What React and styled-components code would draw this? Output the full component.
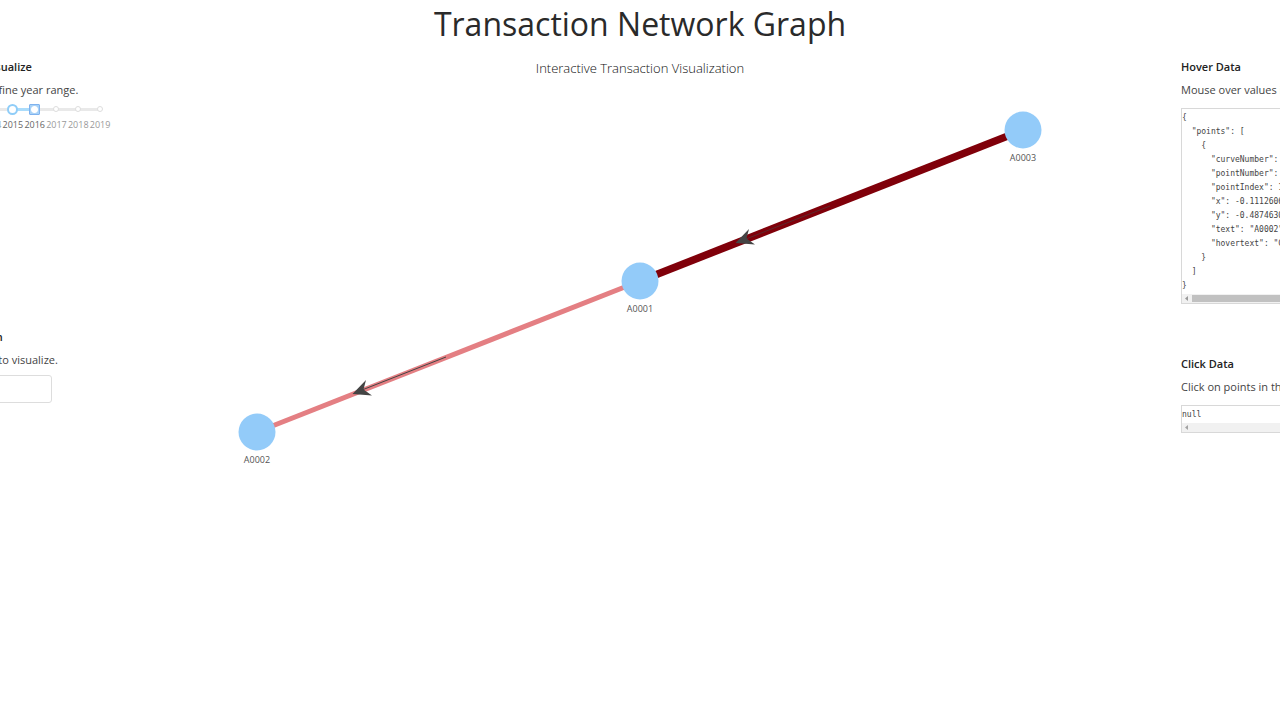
import { useState } from "react";
import styled, { createGlobalStyle } from "styled-components";

const years = [2010, 2011, 2012, 2013, 2014, 2015, 2016, 2017, 2018, 2019];

const nodes = [
  { id: "A0001", x: 640, y: 281 },
  { id: "A0002", x: 257, y: 432 },
  { id: "A0003", x: 1023, y: 130 },
];

const hoverData = {
  points: [
    {
      curveNumber: 2,
      pointNumber: 1,
      pointIndex: 1,
      x: -0.11126064,
      y: -0.48746302,
      text: "A0002",
      hovertext: "CustomerName: A0002",
    },
  ],
};

const YearSlider = () => {
  const [from, setFrom] = useState(2015);
  const [to, setTo] = useState(2016);
  return (
    <SliderWrapper>
      <div className="track">
        {years.map((year) => (
          <Step key={year} $on={year > from && year <= to}>
            <span className="dot" />
          </Step>
        ))}
        <Range
          type="range"
          aria-label="First year"
          min={2010}
          max={2019}
          value={from}
          onChange={(e) => setFrom(Math.min(Number(e.target.value), to))}
        />
        <Range
          $active
          type="range"
          aria-label="Last year"
          min={2010}
          max={2019}
          value={to}
          onChange={(e) => setTo(Math.max(Number(e.target.value), from))}
        />
      </div>
      <div className="marks">
        {years.map((year) => (
          <Mark key={year} $on={year >= from && year <= to}>
            {year}
          </Mark>
        ))}
      </div>
    </SliderWrapper>
  );
};

const DataBox = ({ data, full }) => (
  <Output>
    <pre>{JSON.stringify(data, null, 2)}</pre>
    <ScrollBar $full={full}>
      <svg width="10" height="9" viewBox="0 0 10 9">
        <path d="M6 2v5L3 4.500z" fill={full ? "#a3a3a3" : "#999"} />
      </svg>
      <span className="thumb" />
    </ScrollBar>
  </Output>
);

const Graph = () => (
  <GraphSvg viewBox="99 90 1082 400" role="img" aria-label="Network graph">
    <line x1="640" y1="281" x2="257" y2="432" stroke="#e47f83" strokeWidth="5" />
    <line x1="1023" y1="130" x2="640" y2="281" stroke="#80000a" strokeWidth="7.500" />
    <g fill="#444" stroke="#444">
      <path d="M446 357L362 390" strokeWidth="1" />
      <path d="M352.500 394L366 380L363.500 389.500L372 395.500z" stroke="none" />
      <path d="M830 206L746 239" strokeWidth="1" opacity="0.6" />
      <path d="M735.500 243L749 229L746.500 238.500L755 244.500z" stroke="none" />
    </g>
    {nodes.map(({ id, x, y }) => (
      <g key={id}>
        <circle cx={x} cy={y} r="18.500" fill="#93cbf9" />
        <text x={x} y={y + 31} textAnchor="middle">
          {id}
        </text>
      </g>
    ))}
  </GraphSvg>
);

const App = () => {
  const [account, setAccount] = useState("");
  return (
    <Viewport>
      <GlobalStyle />
      <Title>Transaction Network Graph</Title>
      <Columns>
        <Side>
          <Section>
            <h2>Time Range To Visualize</h2>
            <p>Slide the bar to define year range.</p>
            <YearSlider />
          </Section>
          <Section $top={194}>
            <h2>Account To Search</h2>
            <p>
              <label htmlFor="account">Input the account to visualize.</label>
            </p>
            <AccountInput
              id="account"
              type="text"
              value={account}
              onChange={(e) => setAccount(e.target.value)}
            />
          </Section>
        </Side>
        <Center>
          <Subtitle>Interactive Transaction Visualization</Subtitle>
          <Graph />
        </Center>
        <Side>
          <Section>
            <h2>Hover Data</h2>
            <p>Mouse over values in the graph.</p>
            <DataBox data={hoverData} />
          </Section>
          <Section $top={49}>
            <h2>Click Data</h2>
            <p>Click on points in the graph.</p>
            <DataBox data={null} full />
          </Section>
        </Side>
      </Columns>
    </Viewport>
  );
};

const GlobalStyle = createGlobalStyle`
  * {
    box-sizing: border-box;
  }
  body {
    margin: 0;
    background: #fff;
    color: #444;
    font-family: "Open Sans", sans-serif;
    font-size: 11px;
  }
`;
const Viewport = styled.main`
  min-height: 100vh;
  overflow: hidden;
`;
const Title = styled.h1`
  margin: 0;
  padding-bottom: 8px;
  text-align: center;
  font-size: 32px;
  line-height: 48px;
  font-weight: 400;
  color: #2a2a2a;
`;
const Columns = styled.div`
  display: grid;
  grid-template-columns: 194px 1fr 194px;
  margin: 0 -95px;
`;
const Side = styled.aside`
  min-width: 0;
`;
const Section = styled.section`
  margin-top: ${({ $top }) => $top || 0}px;
  white-space: nowrap;
  h2 {
    margin: 0;
    font-size: 11px;
    line-height: 22px;
    font-weight: 600;
    color: #222;
  }
  p {
    margin: 0;
    line-height: 24px;
    padding-bottom: 6px;
  }
`;
const Center = styled.div`
  text-align: center;
`;
const Subtitle = styled.p`
  margin: 0;
  font-size: 13px;
  font-weight: 300;
  line-height: 24px;
  padding-bottom: 10px;
  color: #111;
`;
const GraphSvg = styled.svg`
  display: block;
  width: 100%;
  text {
    font-size: 9px;
    fill: #555;
  }
`;
const SliderWrapper = styled.div`
  width: 218px;
  margin: -7px 0 0 -12px;
  .track {
    position: relative;
    display: flex;
    height: 16px;
    align-items: center;
  }
  .marks {
    display: flex;
    line-height: 15px;
  }
`;
const Step = styled.span`
  position: relative;
  flex: 1;
  display: flex;
  justify-content: center;
  &::before {
    content: "";
    position: absolute;
    top: 2px;
    right: 50%;
    width: 100%;
    height: 3px;
    background: ${({ $on }) => ($on ? "#abdcfb" : "#e9e9e9")};
  }
  &:first-child::before {
    display: none;
  }
  .dot {
    z-index: 1;
    width: 6px;
    height: 6px;
    border: 1px solid #ddd;
    border-radius: 50%;
    background: #fff;
  }
`;
const Range = styled.input`
  appearance: none;
  position: absolute;
  z-index: 2;
  top: 0;
  left: 5px;
  width: calc(100% - 10px);
  height: 16px;
  margin: 0;
  background: transparent;
  pointer-events: none;
  &::-webkit-slider-thumb {
    appearance: none;
    width: 11px;
    height: 11px;
    border: ${({ $active }) => ($active ? "1px" : "2px")} solid;
    border-radius: ${({ $active }) => ($active ? "1px" : "50%")};
    background: ${({ $active }) =>
      $active ? "radial-gradient(#fff 3px, #a9d2f7 4px)" : "#fff"};
    border-color: ${({ $active }) => ($active ? "#7fb2ee" : "#8fcdf8")};
    pointer-events: auto;
    cursor: grab;
  }
`;
const Mark = styled.span`
  flex: 1;
  text-align: center;
  font-size: 9px;
  color: ${({ $on }) => ($on ? "#666" : "#999")};
`;
const AccountInput = styled.input`
  display: block;
  width: 147px;
  height: 28px;
  margin-top: -3px;
  padding: 4px 8px;
  border: 1px solid #ddd;
  border-radius: 3px;
  font: inherit;
`;
const Output = styled.div`
  border: 1px solid #d8d8d8;
  overflow: hidden;
  pre {
    margin: 0;
    padding: 2px 0 1px;
    overflow: hidden;
    font-family: "DejaVu Sans Mono", monospace;
    font-size: 8px;
    line-height: 14px;
  }
`;
const ScrollBar = styled.div`
  display: flex;
  height: 9px;
  background: #f1f1f1;
  .thumb {
    display: ${({ $full }) => ($full ? "none" : "block")};
    width: 140px;
    margin: 1px 0;
    background: #c1c1c1;
  }
`;
export default App;
